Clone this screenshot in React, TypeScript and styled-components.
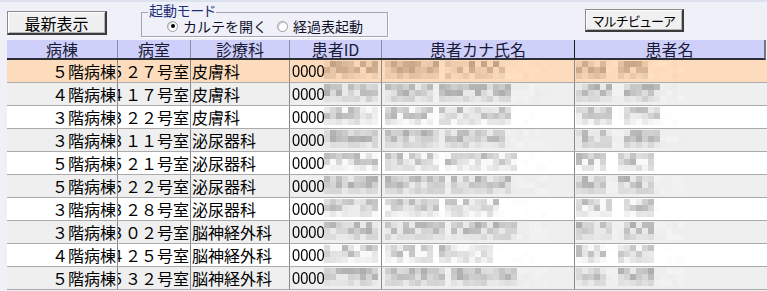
import React from "react";
import styled, { createGlobalStyle } from "styled-components";

type Shade = "sel" | "odd" | "even";

const BG: Record<Shade, [number, number, number]> = {
  sel: [252, 220, 188],
  odd: [239, 239, 239],
  even: [255, 255, 255],
};

const INK: Record<Shade, [number, number, number]> = {
  sel: [128, 92, 62],
  odd: [96, 96, 96],
  even: [96, 96, 96],
};

const rows = [
  { ward: "５階病棟", room: "５２７号室", dept: "皮膚科" },
  { ward: "４階病棟", room: "４１７号室", dept: "皮膚科" },
  { ward: "３階病棟", room: "３２２号室", dept: "皮膚科" },
  { ward: "３階病棟", room: "３１１号室", dept: "泌尿器科" },
  { ward: "５階病棟", room: "５２１号室", dept: "泌尿器科" },
  { ward: "５階病棟", room: "５２２号室", dept: "泌尿器科" },
  { ward: "３階病棟", room: "３２８号室", dept: "泌尿器科" },
  { ward: "３階病棟", room: "３０２号室", dept: "脳神経外科" },
  { ward: "４階病棟", room: "４２５号室", dept: "脳神経外科" },
  { ward: "５階病棟", room: "５３２号室", dept: "脳神経外科" },
];

// small seeded random so the pixelated (hidden) names stay the same each run
const rand = (seed: number) => {
  let a = seed >>> 0;
  return () => {
    a = (a + 0x6d2b79f5) >>> 0;
    let t = a;
    t = Math.imul(t ^ (t >>> 15), t | 1);
    t ^= t + Math.imul(t ^ (t >>> 7), t | 61);
    return ((t ^ (t >>> 14)) >>> 0) / 4294967296;
  };
};

const mix = (shade: Shade, d: number) => {
  const b = BG[shade];
  const k = INK[shade];
  const c = b.map((v, i) => Math.round(v * (1 - d) + k[i] * d));
  return `rgb(${c[0]},${c[1]},${c[2]})`;
};

const makeTiles = (
  seed: number,
  cols: number,
  words: [number, number][],
  shade: Shade
) => {
  const r = rand(seed);
  const out: string[] = [];
  for (let y = 0; y < 3; y++) {
    for (let x = 0; x < cols; x++) {
      const inWord = words.some(([s, l]) => x >= s && x < s + l);
      let d = r() * 0.05 - 0.03;
      if (inWord) {
        d = y === 2 ? 0.06 + r() * 0.16 : 0.1 + r() * 0.36;
        if (r() < 0.15) d = 0.04;
      }
      out.push(mix(shade, Math.max(-0.04, d)));
    }
  }
  return out;
};

const GlobalStyle = createGlobalStyle`
  html, body {
    margin: 0;
    padding: 0;
  }
  body {
    background: #eff0f8;
    font-family: "Noto Sans CJK JP", "Noto Sans", sans-serif;
    color: #000;
    overflow: hidden;
  }
`;

const Page = styled.div`
  width: 767px;
  height: 291px;
  border-top: 2px solid #dde1ee;
  box-sizing: border-box;
  overflow: hidden;
`;

const Toolbar = styled.div`
  display: flex;
  align-items: flex-start;
  height: 38px;
  padding-left: 7px;
`;

const WinButton = styled.button<{ $w: number; $h: number; $top: number; $size: number; $left: number }>`
  width: ${(p) => p.$w}px;
  height: ${(p) => p.$h}px;
  margin: ${(p) => p.$top}px 0 0 ${(p) => p.$left}px;
  padding: 0;
  background: #f0f0f0;
  border-style: solid;
  border-width: 1px 2px 2px 1px;
  border-color: #8a8a8a #3c3c3c #3c3c3c #8a8a8a;
  box-shadow: inset 1px 1px #ffffff, inset -1px -1px #b4b4b4;
  font-family: "Noto Sans CJK JP", sans-serif;
  font-size: ${(p) => p.$size}px;
  font-feature-settings: "palt";
  line-height: 1;
  color: #000;
  display: flex;
  align-items: center;
  justify-content: center;
`;

const Group = styled.div`
  position: relative;
  box-sizing: border-box;
  width: 247px;
  height: 25px;
  margin: 10px 0 0 34px;
  border: 1px solid #a4a4b0;
  box-shadow: 1px 1px #ffffff;
  display: flex;
  align-items: center;
  padding-left: 25px;
  padding-top: 3px;
`;

const Legend = styled.span`
  position: absolute;
  left: 6px;
  top: -10px;
  padding: 0 1px;
  background: #eff0f8;
  font-size: 14px;
  line-height: 14px;
  font-feature-settings: "palt";
  color: #1c2f78;
`;

const Radio = styled.span<{ $on: boolean; $gap: number }>`
  box-sizing: border-box;
  width: 11px;
  height: 11px;
  margin-left: ${(p) => p.$gap}px;
  border-radius: 50%;
  border: 1px solid #9c9ca4;
  background: #fff;
  box-shadow: inset 1px 1px #d0d0d0;
  display: flex;
  align-items: center;
  justify-content: center;
  &::after {
    content: "";
    display: ${(p) => (p.$on ? "block" : "none")};
    width: 4px;
    height: 4px;
    border-radius: 50%;
    background: #000;
  }
`;

const RadioText = styled.span`
  margin-left: 5px;
  font-size: 14px;
  line-height: 15px;
  color: #10102a;
`;

const Table = styled.div`
  margin-left: 7px;
  width: 760px;
`;

const cols = "111px 73px 99px 92px 193px 1fr";

const HeadRow = styled.div`
  display: grid;
  grid-template-columns: ${cols};
  height: 20px;
  margin-right: 1px;
  box-sizing: border-box;
  background: #cfd0fa;
  border-bottom: 2px solid #2e2e36;
  border-right: 2px solid #76767e;
`;

const HeadCell = styled.div<{ $dark?: boolean }>`
  font-size: 16px;
  line-height: 18px;
  text-align: center;
  color: #1a1a36;
  border-right: 1px solid ${(p) => (p.$dark ? "#1a1a1a" : "#8c8ca2")};
  white-space: nowrap;
  &:last-child {
    border-right: none;
  }
`;

const Row = styled.div<{ $shade: Shade }>`
  display: grid;
  grid-template-columns: ${cols};
  height: 23px;
  box-sizing: border-box;
  border-bottom: 1px solid #aaaaaa;
  background: ${(p) => {
    const c = BG[p.$shade];
    return `rgb(${c[0]},${c[1]},${c[2]})`;
  }};
`;

const Cell = styled.div<{ $align?: "left" | "right" }>`
  display: flex;
  align-items: center;
  justify-content: ${(p) => (p.$align === "right" ? "flex-end" : "flex-start")};
  overflow: hidden;
  white-space: nowrap;
  font-size: 16px;
  line-height: 22px;
  border-right: 1px solid #8a8a8a;
  padding: ${(p) => (p.$align === "right" ? "0 1px 0 0" : "0 0 0 1px")};
  &:last-child {
    border-right: none;
  }
`;

const MosaicCell = styled(Cell)<{ $pad: number }>`
  align-items: flex-start;
  padding-left: ${(p) => p.$pad}px;
`;

const IdDigits = styled.span`
  display: inline-block;
  width: 32px;
  margin-top: 1px;
  font-family: "Liberation Sans", sans-serif;
  font-size: 17px;
  line-height: 21px;
  transform: scaleX(0.86);
  transform-origin: left center;
  flex-shrink: 0;
`;

const Mosaic = styled.div<{ $cols: number }>`
  display: grid;
  grid-template-columns: repeat(${(p) => p.$cols}, 6px);
  grid-auto-rows: 6px;
  margin-top: 1px;
  flex-shrink: 0;
  filter: blur(0.6px);
`;

const Tile = styled.span.attrs<{ $c: string }>((p) => ({
  style: { background: p.$c },
}))<{ $c: string }>`
  display: block;
`;

const Pixelated: React.FC<{
  seed: number;
  cols: number;
  words: [number, number][];
  shade: Shade;
}> = ({ seed, cols, words, shade }) => {
  const tiles = makeTiles(seed, cols, words, shade);
  return (
    <Mosaic $cols={cols}>
      {tiles.map((c, i) => (
        <Tile key={i} $c={c} />
      ))}
    </Mosaic>
  );
};

export default function App() {
  return (
    <>
      <GlobalStyle />
      <Page>
        <Toolbar>
          <WinButton $w={100} $h={24} $top={9} $left={0} $size={16}>
            最新表示
          </WinButton>
          <Group>
            <Legend>起動モード</Legend>
            <Radio $on={true} $gap={0} />
            <RadioText>カルテを開く</RadioText>
            <Radio $on={false} $gap={10} />
            <RadioText>経過表起動</RadioText>
          </Group>
          <WinButton $w={99} $h={23} $top={7} $left={197} $size={13}>
            マルチビューア
          </WinButton>
        </Toolbar>
        <Table>
          <HeadRow>
            <HeadCell>病棟</HeadCell>
            <HeadCell>病室</HeadCell>
            <HeadCell>診療科</HeadCell>
            <HeadCell>患者ID</HeadCell>
            <HeadCell $dark>患者カナ氏名</HeadCell>
            <HeadCell>患者名</HeadCell>
          </HeadRow>
          {rows.map((r, i) => {
            const shade: Shade = i === 0 ? "sel" : i % 2 === 1 ? "odd" : "even";
            const g = rand(i * 97 + 13);
            const k1 = 8 + Math.floor(g() * 3);
            const k2 = 9 + Math.floor(g() * 4);
            const n1 = 5 + Math.floor(g() * 2);
            const n2 = 5 + Math.floor(g() * 2);
            return (
              <Row key={i} $shade={shade}>
                <Cell $align="right">{r.ward}</Cell>
                <Cell $align="right">{r.room}</Cell>
                <Cell>{r.dept}</Cell>
                <MosaicCell $pad={2}>
                  <IdDigits>0000</IdDigits>
                  <Pixelated seed={i * 31 + 1} cols={9} words={[[0, 9]]} shade={shade} />
                </MosaicCell>
                <MosaicCell $pad={3}>
                  <Pixelated
                    seed={i * 31 + 2}
                    cols={27}
                    words={[
                      [0, k1],
                      [k1 + 1, k2],
                    ]}
                    shade={shade}
                  />
                </MosaicCell>
                <MosaicCell $pad={1}>
                  <Pixelated
                    seed={i * 31 + 3}
                    cols={18}
                    words={[
                      [0, n1],
                      [n1 + 2, n2],
                    ]}
                    shade={shade}
                  />
                </MosaicCell>
              </Row>
            );
          })}
        </Table>
      </Page>
    </>
  );
}
